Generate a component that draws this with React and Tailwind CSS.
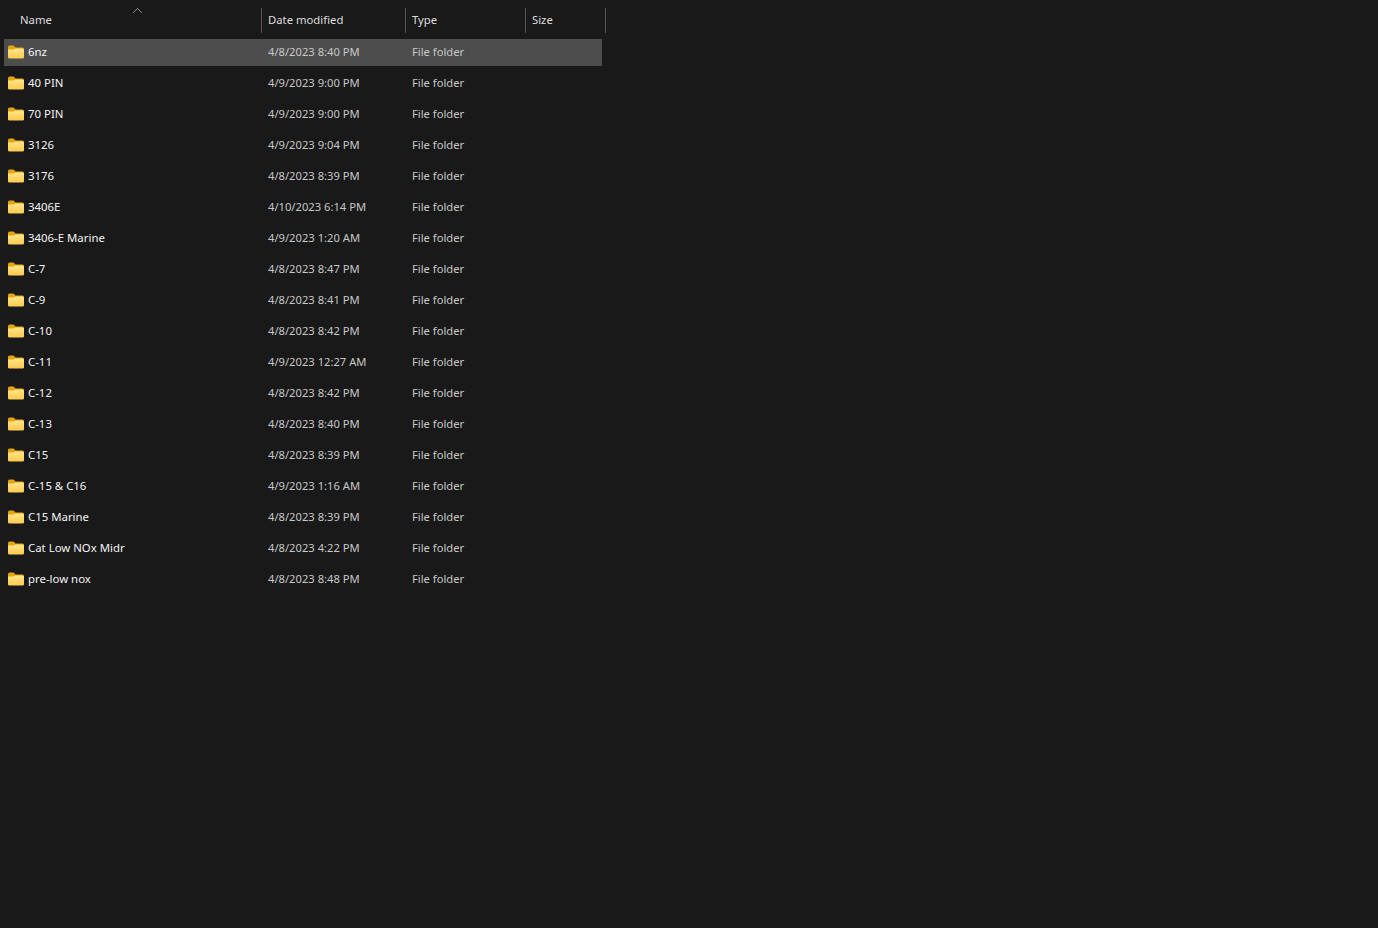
import React from "react";
import { ChevronUp } from "lucide-react";

const folders = [
  { name: "6nz", date: "4/8/2023 8:40 PM", selected: true },
  { name: "40 PIN", date: "4/9/2023 9:00 PM" },
  { name: "70 PIN", date: "4/9/2023 9:00 PM" },
  { name: "3126", date: "4/9/2023 9:04 PM" },
  { name: "3176", date: "4/8/2023 8:39 PM" },
  { name: "3406E", date: "4/10/2023 6:14 PM" },
  { name: "3406-E Marine", date: "4/9/2023 1:20 AM" },
  { name: "C-7", date: "4/8/2023 8:47 PM" },
  { name: "C-9", date: "4/8/2023 8:41 PM" },
  { name: "C-10", date: "4/8/2023 8:42 PM" },
  { name: "C-11", date: "4/9/2023 12:27 AM" },
  { name: "C-12", date: "4/8/2023 8:42 PM" },
  { name: "C-13", date: "4/8/2023 8:40 PM" },
  { name: "C15", date: "4/8/2023 8:39 PM" },
  { name: "C-15 & C16", date: "4/9/2023 1:16 AM" },
  { name: "C15 Marine", date: "4/8/2023 8:39 PM" },
  { name: "Cat Low NOx Midr", date: "4/8/2023 4:22 PM" },
  { name: "pre-low nox", date: "4/8/2023 8:48 PM" },
];

const FolderIcon = () => (
  <svg width="16" height="14" viewBox="0 0 16 14" className="mt-px shrink-0">
    <defs>
      <linearGradient id="folderFront" x1="0" y1="0" x2="0" y2="1">
        <stop offset="0" stopColor="#ffe68a" />
        <stop offset="1" stopColor="#fcc94f" />
      </linearGradient>
    </defs>
    <path d="M0 2 Q0 0.5 1.5 0.5 H5.5 L7.5 2.5 H14.5 Q16 2.5 16 4 V6 H0 Z" fill="#e5a50f" />
    <path d="M0 4.5 H5.5 L7.5 3.5 H14.5 Q16 3.5 16 5 V12.5 Q16 13.5 14.5 13.5 H1.5 Q0 13.5 0 12.5 Z" fill="url(#folderFront)" />
  </svg>
);

const HeaderCell = ({ label, className }) => (
  <div className={`h-[25px] border-r border-[#555555] pt-1 text-[11.3px] leading-4 text-[#dedede] ${className}`}>
    {label}
  </div>
);

export default function App() {
  return (
    <div className="min-h-[928px] bg-[#191919] font-['Noto_Sans',sans-serif] overflow-hidden">
      <div className="relative flex pt-2 w-[606px]">
        <ChevronUp className="absolute left-[129px] top-[2px] text-[#c0c0c0]" size={17} strokeWidth={1} />
        <HeaderCell label="Name" className="w-[262px] pl-5" />
        <HeaderCell label="Date modified" className="w-[144px] pl-1.5" />
        <HeaderCell label="Type" className="w-[120px] pl-1.5" />
        <HeaderCell label="Size" className="w-[80px] pl-1.5" />
      </div>
      <div className="ml-1 mt-1.5 flex w-[598px] flex-col gap-1">
        {folders.map((f) => (
          <div
            key={f.name}
            className={`flex h-[27px] pt-[5px] text-[11.2px] leading-4 ${f.selected ? "bg-[#4d4d4d]" : ""}`}
          >
            <div className="flex w-[258px] gap-1 pl-1 text-[11.4px] text-[#f4f4f4]">
              <FolderIcon />
              <span>{f.name}</span>
            </div>
            <div className="w-[144px] pl-1.5 text-[#c8c8c8]">{f.date}</div>
            <div className="pl-1.5 text-[#c8c8c8]">File folder</div>
          </div>
        ))}
      </div>
    </div>
  );
}
